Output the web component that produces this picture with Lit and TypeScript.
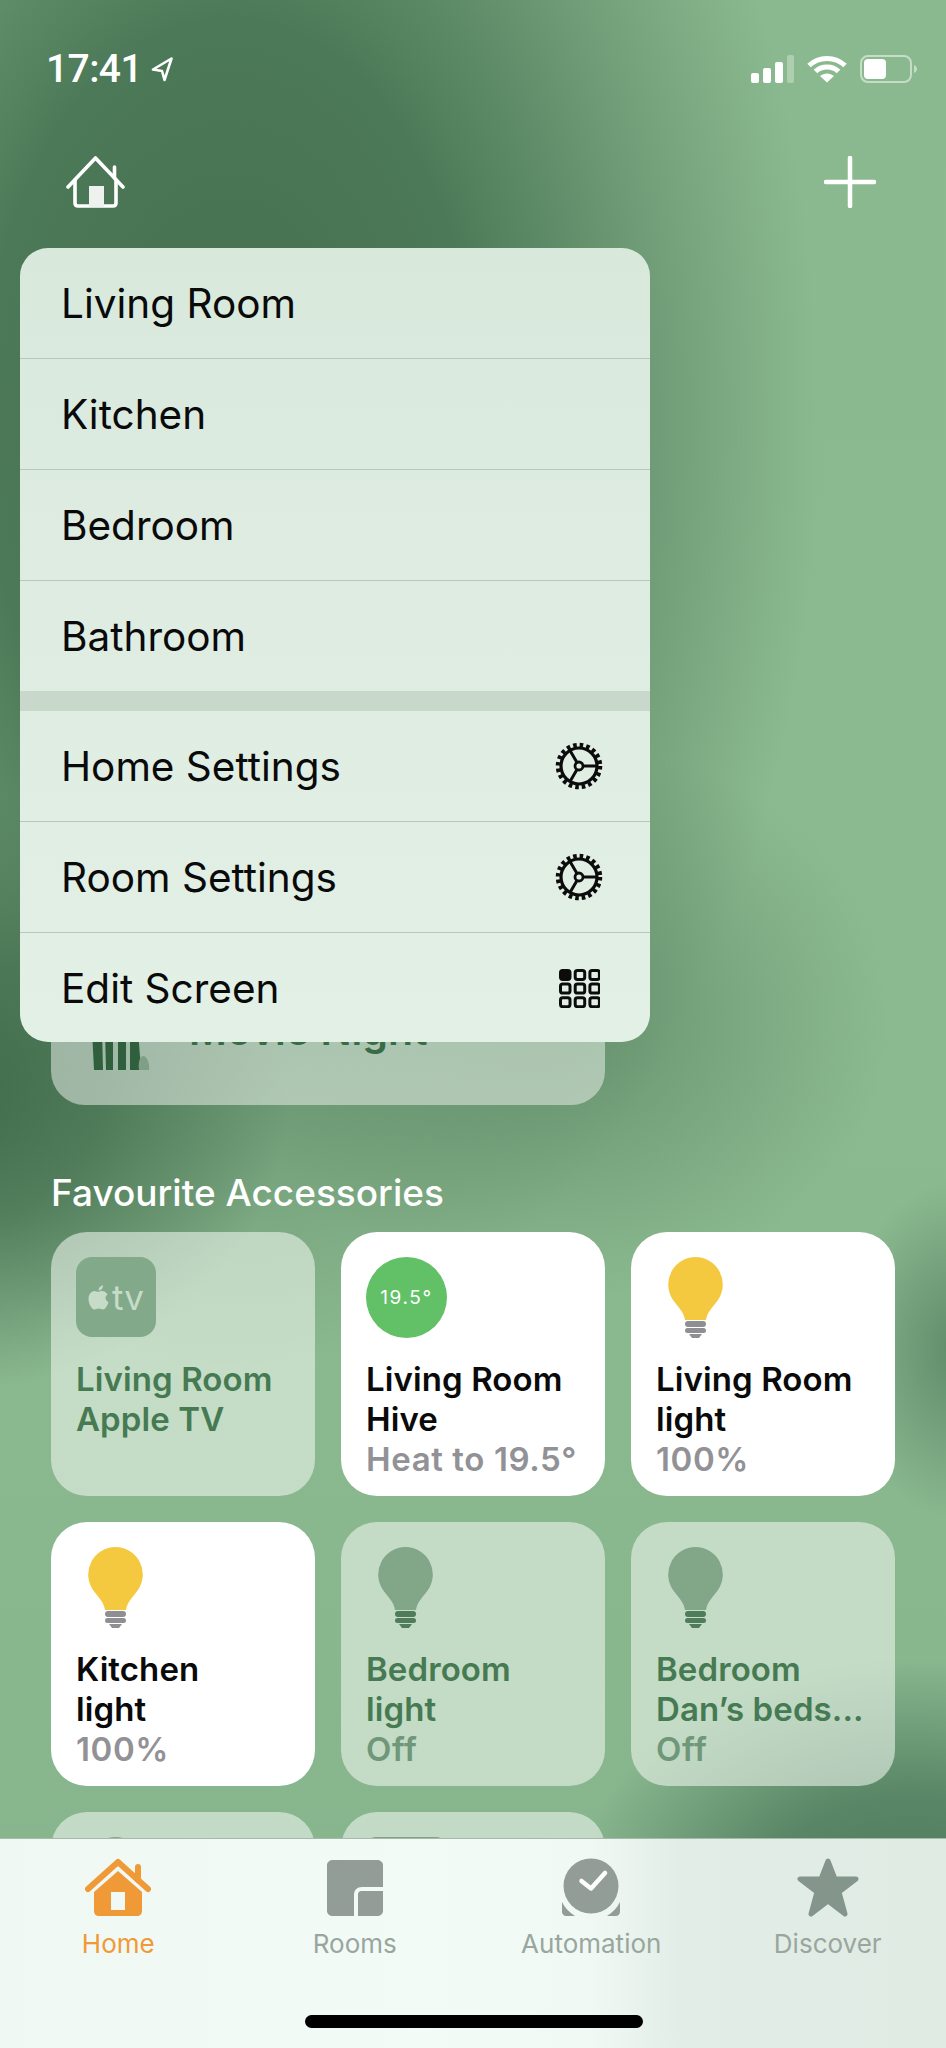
import { LitElement, css, html, svg } from 'lit';
import { customElement } from 'lit/decorators.js';

type Tile = { name: string[]; sub?: string; on?: boolean; icon: 'bulb' | 'tv' | 'temp' | 'box' };

const tiles: Tile[] = [
  { name: ['Living Room', 'Apple TV'], icon: 'tv' },
  { name: ['Living Room', 'Hive'], sub: 'Heat to 19.5°', on: true, icon: 'temp' },
  { name: ['Living Room', 'light'], sub: '100%', on: true, icon: 'bulb' },
  { name: ['Kitchen', 'light'], sub: '100%', on: true, icon: 'bulb' },
  { name: ['Bedroom', 'light'], sub: 'Off', icon: 'bulb' },
  { name: ['Bedroom', 'Dan’s beds...'], sub: 'Off', icon: 'bulb' },
  { name: [], icon: 'bulb' },
  { name: [], icon: 'box' },
];

const bulb = svg`<path class="glass" d="M27.5 0A27.5 27.5 0 0 1 50 43C45 50 39 55 38 63H17C16 55 10 50 5 43A27.5 27.5 0 0 1 27.5 0Z"/>
  <rect class="base" x="17" y="64" width="21" height="6" rx="3"/>
  <rect class="base" x="17" y="71" width="21" height="5" rx="2.5"/>
  <path class="base" d="M21 77H34L31 81H24Z"/>`;

const gear = html`<svg class="gear" viewBox="0 0 48 48" fill="none" stroke="#0c0c0c">
  <circle cx="24" cy="24" r="18" stroke-width="3.2"/>
  <circle cx="24" cy="24" r="21" stroke-width="4.500" stroke-dasharray="3.6 3"/>
  <circle cx="24" cy="24" r="4" stroke-width="2.8"/>
  <path d="M28 24H42M22 27.5L15 39.6M22 20.5L15 8.4" stroke-width="3"/>
</svg>`;

const grid = html`<svg class="grid" viewBox="0 0 41 39" fill="none" stroke="#0c0c0c" stroke-width="3">
  ${[0, 1, 2].map((r) => [0, 1, 2].map((c) => svg`<rect x=${1.5 + c * 14.7} y=${1.5 + r * 13.6} width="9.5" height="9" rx="2.2" fill=${r + c === 0 ? '#0c0c0c' : 'none'}/>`))}
</svg>`;

@customElement('app-root')
export class AppRoot extends LitElement {
  static styles = css`
    :host {
      display: block;
      position: relative;
      width: 946px;
      height: 2048px;
      overflow: hidden;
      font-family: Inter, 'Noto Sans', sans-serif;
      background:
        radial-gradient(340px 250px at 910px 1910px, #4c7a5c 0%, rgba(76, 122, 92, 0.8) 45%, rgba(76, 122, 92, 0) 100%),
        radial-gradient(120px 170px at 960px 1350px, #5f8b69 0%, rgba(95, 139, 105, 0) 100%),
        radial-gradient(340px 300px at -50px 1090px, #3f6a4b 0%, rgba(63, 106, 75, 0.7) 45%, rgba(63, 106, 75, 0) 100%),
        radial-gradient(330px 280px at 560px 1020px, rgba(96, 140, 104, 0.85) 0%, rgba(96, 140, 104, 0) 100%),
        radial-gradient(590px 950px at 230px 420px, #456f50 0%, #4c7957 42%, rgba(110, 155, 117, 0.95) 72%, rgba(110, 155, 117, 0) 100%),
        linear-gradient(180deg, #8bb98f 0%, #8cba90 50%, #86b48c 100%);
    }
    .status {
      display: flex;
      align-items: center;
      height: 28px;
      padding: 55px 29px 0 46px;
      color: #fff;
    }
    .time {
      font-family: Roboto, sans-serif;
      font-size: 39px;
      font-weight: 500;
      line-height: 28px;
      letter-spacing: -0.6px;
    }
    .arrow {
      width: 22px;
      height: 25px;
      margin-left: 9px;
    }
    .signal {
      width: 43px;
      height: 28px;
      margin-left: auto;
    }
    .wifi {
      width: 40px;
      height: 28px;
      margin-left: 13px;
    }
    .battery {
      width: 57px;
      height: 28px;
      margin-left: 13px;
    }
    .nav {
      display: flex;
      justify-content: space-between;
      align-items: center;
      height: 52px;
      padding: 73px 70px 0 66px;
    }
    .nav-home {
      width: 59px;
      height: 52px;
    }
    .plus {
      width: 52px;
      height: 52px;
    }
    .content {
      padding: 787px 51px 0;
    }
    .scene {
      display: flex;
      align-items: flex-end;
      width: 554px;
      height: 110px;
      border-radius: 34px;
      background: rgba(236, 242, 236, 0.52);
      box-sizing: border-box;
      padding: 0 0 35px 41px;
    }
    .scene svg {
      width: 58px;
      height: 40px;
      flex: none;
    }
    .scene span {
      margin-left: 39px;
      margin-bottom: 20px;
      font-size: 41px;
      line-height: 40px;
      font-weight: 600;
      color: #386b47;
    }
    h2 {
      margin: 65px 0 16px 0;
      font-size: 37px;
      line-height: 46px;
      font-weight: 500;
      color: #fff;
    }
    .tiles {
      display: grid;
      grid-template-columns: repeat(3, 264px);
      grid-auto-rows: 264px;
      gap: 26px;
    }
    .tile {
      display: flex;
      flex-direction: column;
      box-sizing: border-box;
      padding: 25px 10px 0 25px;
      border-radius: 36px;
      background: rgba(240, 246, 240, 0.58);
      color: #467a52;
    }
    .tile.on {
      background: #fff;
      color: #0a0a0a;
    }
    .tile-icon {
      height: 81px;
      flex: none;
    }
    .bulb {
      display: block;
      width: 55px;
      height: 81px;
      margin-left: 12px;
    }
    .glass {
      fill: #81a688;
    }
    .base {
      fill: #4f7c5a;
    }
    .on .glass {
      fill: #f5c93f;
    }
    .on .base {
      fill: #8f8f93;
    }
    .temp {
      display: flex;
      align-items: center;
      justify-content: center;
      width: 81px;
      height: 81px;
      border-radius: 50%;
      background: #62c067;
      color: #fff;
      font-size: 19px;
      letter-spacing: 1.6px;
    }
    .tv {
      display: flex;
      align-items: center;
      justify-content: center;
      gap: 3px;
      width: 80px;
      height: 80px;
      border-radius: 16px;
      background: #82a989;
      color: #c6dcc9;
      font-size: 35px;
      font-weight: 400;
    }
    .tv svg {
      width: 21px;
      height: 25px;
    }
    .box {
      width: 74px;
      height: 60px;
      margin-left: 3px;
      border-radius: 6px;
      background: #7fa386;
    }
    .label {
      margin-top: 21px;
      font-size: 33px;
      line-height: 40px;
      font-weight: 600;
      letter-spacing: 0.1px;
      white-space: nowrap;
    }
    .sub {
      color: #919196;
      letter-spacing: 0.6px;
    }
    .tile:not(.on) .sub {
      color: #6f977a;
    }
    .menu {
      position: absolute;
      left: 20px;
      top: 248px;
      width: 630px;
      height: 794px;
      border-radius: 28px;
      overflow: hidden;
      background: linear-gradient(180deg, #d8e9dc 0%, #dfece2 45%, #e2f0e6 100%);
      color: #0a0a0a;
      font-size: 40.5px;
    }
    .row {
      display: flex;
      align-items: center;
      justify-content: space-between;
      box-sizing: border-box;
      height: 111px;
      padding: 0 47px 0 41px;
      border-bottom: 1px solid #b6c8ba;
    }
    .row.last {
      border-bottom: 0;
    }
    .band {
      height: 20px;
      margin-top: -1px;
      background: #c8d8cb;
    }
    .gear {
      display: block;
      width: 48px;
      height: 48px;
    }
    .grid {
      display: block;
      width: 41px;
      height: 39px;
      margin-right: 3px;
    }
    .tabbar {
      position: absolute;
      left: 0;
      right: 0;
      bottom: 0;
      height: 210px;
      display: grid;
      grid-template-columns: repeat(4, 1fr);
      align-items: start;
      box-sizing: border-box;
      border-top: 1px solid #a8b9ab;
      background: linear-gradient(90deg, #eff8f3 0%, #f3fbf7 45%, #f1f9f5 62%, #e2ede7 72%, #e0ebe4 100%);
    }
    .tab {
      display: flex;
      flex-direction: column;
      align-items: center;
      padding-top: 19px;
      font-size: 26px;
      line-height: 30px;
      color: #99a69e;
    }
    .tab svg {
      display: block;
      height: 59px;
      margin-bottom: 12px;
    }
    .tab.active {
      color: #f09a37;
    }
    .homebar {
      position: absolute;
      left: 305px;
      top: 2015px;
      width: 338px;
      height: 13px;
      border-radius: 7px;
      background: #000;
    }
  `;

  private tileIcon(t: Tile) {
    if (t.icon === 'temp') return html`<div class="temp">19.5°</div>`;
    if (t.icon === 'box') return html`<div class="box"></div>`;
    if (t.icon === 'tv') {
      return html`<div class="tv">
        <svg viewBox="0 0 21 25" fill="#c6dcc9"><path d="M10.5 7C12 6 14.5 5.5 16.500 6.500C18 7.300 19 8.500 19.500 9.500C17 11 16.500 15 20.500 17C19.500 20 17.500 24.500 15 24.500C13.500 24.500 12.500 23.500 10.800 23.500C9 23.500 8 24.500 6.500 24.500C3.500 24.500 0.500 18.500 0.500 14C0.500 9 3.500 6 6.500 6C8 6 9.500 7 10.500 7ZM10.500 5.500C10.500 3 12.500 0.500 15 0.500C15.200 3 13 5.800 10.500 5.500Z"/></svg>
        <span>tv</span>
      </div>`;
    }
    return html`<svg class="bulb" viewBox="0 0 55 81">${bulb}</svg>`;
  }

  render() {
    return html`
      <div class="status">
        <span class="time">17:41</span>
        <svg class="arrow" viewBox="0 0 22 25" fill="none" stroke="#fff" stroke-width="2.600" stroke-linejoin="round"><path d="M20.500 1.500L2 12.500L11 14L13.500 23Z"/></svg>
        <svg class="signal" viewBox="0 0 43 28" fill="#fff">
          <rect x="0" y="18" width="8" height="10" rx="2"/>
          <rect x="12" y="13" width="8" height="15" rx="2"/>
          <rect x="24" y="7" width="8" height="21" rx="2"/>
          <rect x="36" y="0" width="7" height="28" rx="2" opacity=".3"/>
        </svg>
        <svg class="wifi" viewBox="0 0 40 28" fill="none" stroke="#fff" stroke-width="5">
          <path d="M2 10.500C12 1 28 1 38 10.500"/>
          <path d="M8.500 16.500C14.500 10.500 25.500 10.500 31.500 16.500"/>
          <path d="M20 27.500L13 21C17 17.500 23 17.500 27 21Z" fill="#fff" stroke="none"/>
        </svg>
        <svg class="battery" viewBox="0 0 57 28" fill="none">
          <rect x="1" y="1" width="50" height="26" rx="7" stroke="#fff" stroke-width="2" opacity=".5"/>
          <rect x="4" y="4" width="22" height="20" rx="4" fill="#fff"/>
          <path d="M54 10C56 11 57 12.500 57 14C57 15.500 56 17 54 18Z" fill="#fff" opacity=".5"/>
        </svg>
      </div>
      <div class="nav">
        <svg class="nav-home" viewBox="0 0 59 52" fill="none" stroke="#fff" stroke-width="3.600" stroke-linecap="round" stroke-linejoin="round">
          <path d="M2 31L29.500 2L57 31"/>
          <path d="M48.500 22V11"/>
          <path d="M9 24V47C9 49 10 50 12 50H47C49 50 50 49 50 47V24"/>
          <rect x="23" y="30" width="15" height="21" fill="#eef2ee" stroke="none"/>
        </svg>
        <svg class="plus" viewBox="0 0 52 52" stroke="#fff" stroke-width="4.500" stroke-linecap="round"><path d="M26 2V50M2 26H50"/></svg>
      </div>
      <div class="content">
        <div class="scene">
          <svg viewBox="0 0 58 40">
            <path fill="#2f5f3c" d="M0 0H10L11 40H2ZM13 0H21V40H14ZM26 0H34V40H26ZM38 0H46L49 40H38Z"/>
            <path fill="#7f9f86" d="M47 40C46 32 48 26 51 26C55 26 58 34 57 40Z"/>
          </svg>
          <span>Movie Night</span>
        </div>
        <h2>Favourite Accessories</h2>
        <div class="tiles">
          ${tiles.map(
            (t) => html`<div class="tile ${t.on ? 'on' : ''}">
              <div class="tile-icon">${this.tileIcon(t)}</div>
              <div class="label">
                ${t.name.map((n) => html`<div>${n}</div>`)}
                ${t.sub ? html`<div class="sub">${t.sub}</div>` : ''}
              </div>
            </div>`
          )}
        </div>
      </div>
      <div class="menu">
        <div class="row">Living Room</div>
        <div class="row">Kitchen</div>
        <div class="row">Bedroom</div>
        <div class="row">Bathroom</div>
        <div class="band"></div>
        <div class="row">Home Settings ${gear}</div>
        <div class="row">Room Settings ${gear}</div>
        <div class="row last">Edit Screen ${grid}</div>
      </div>
      <div class="tabbar">
        <div class="tab active">
          <svg width="66" viewBox="0 0 66 59">
            <path d="M3 31L33 4L53 22V9" fill="none" stroke="#f09a37" stroke-width="6" stroke-linecap="round" stroke-linejoin="round"/>
            <path d="M53 22L63 31" fill="none" stroke="#f09a37" stroke-width="6" stroke-linecap="round"/>
            <path fill="#f09a37" fill-rule="evenodd" d="M33 13L57 34V53C57 56 55 58 52 58H14C11 58 9 56 9 53V34ZM26 34V52H40V34Z"/>
          </svg>
          <span>Home</span>
        </div>
        <div class="tab">
          <svg width="56" viewBox="0 0 56 59">
            <path fill="#919d96" d="M6 2H50C53 2 56 4 56 7V29H35C30 29 27 32 27 37V58H6C3 58 0 56 0 53V7C0 4 3 2 6 2Z"/>
            <path fill="#919d96" d="M35 33H56V53C56 56 53 58 50 58H31V37C31 34 32 33 35 33Z"/>
          </svg>
          <span>Rooms</span>
        </div>
        <div class="tab">
          <svg width="58" viewBox="0 0 58 59">
            <circle cx="29" cy="28" r="27.500" fill="#919d96"/>
            <path d="M19.500 23L29 30.500L43 15" fill="none" stroke="#fff" stroke-width="4.500" stroke-linecap="round" stroke-linejoin="round"/>
            <path fill="#919d96" d="M0 44C3 50 7 54 13 58H4C2 58 0 56 0 54ZM58 44C55 50 51 54 45 58H54C56 58 58 56 58 54Z"/>
          </svg>
          <span>Automation</span>
        </div>
        <div class="tab">
          <svg width="62" viewBox="0 0 62 59">
            <path fill="#84968c" stroke="#84968c" stroke-width="5" stroke-linejoin="round" d="M31 3L38 21H59L42 34L48 56L31 43L14 56L20 34L3 21H24Z"/>
          </svg>
          <span>Discover</span>
        </div>
      </div>
      <div class="homebar"></div>
    `;
  }
}
